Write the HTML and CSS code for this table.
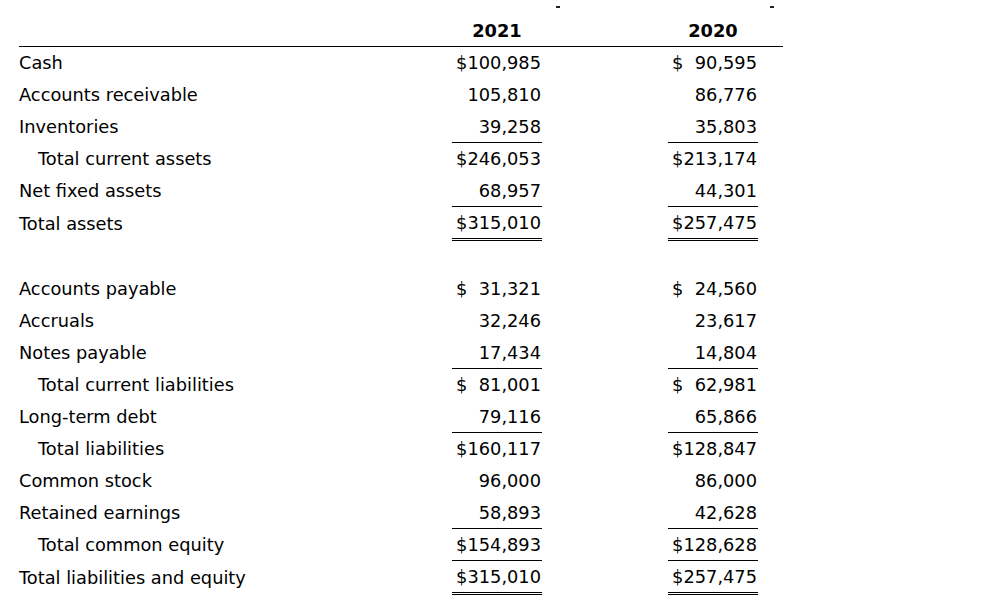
FILE: index.html
```html
<!DOCTYPE html>
<html lang="en">
<head>
<meta charset="utf-8">
<title>Balance Sheet</title>
<link rel="stylesheet" href="styles.css">
</head>
<body>
<div class="cutoff"><span class="tick tick-a"></span><span class="tick tick-b"></span></div>
<table class="sheet">
  <colgroup>
    <col class="c-label"><col class="c-num"><col class="c-gap"><col class="c-num"><col class="c-end">
  </colgroup>
  <thead>
    <tr><th></th><th class="year">2021</th><th></th><th class="year">2020</th><th></th></tr>
  </thead>
  <tbody>
    <tr><td>Cash</td><td class="num"><div class="amt"><span>$</span><span>100,985</span></div></td><td></td><td class="num"><div class="amt"><span>$</span><span>90,595</span></div></td><td></td></tr>
    <tr><td>Accounts receivable</td><td class="num"><div class="amt"><span></span><span>105,810</span></div></td><td></td><td class="num"><div class="amt"><span></span><span>86,776</span></div></td><td></td></tr>
    <tr><td>Inventories</td><td class="num rule"><div class="amt"><span></span><span>39,258</span></div></td><td></td><td class="num rule"><div class="amt"><span></span><span>35,803</span></div></td><td></td></tr>
    <tr><td class="indent">Total current assets</td><td class="num"><div class="amt"><span>$</span><span>246,053</span></div></td><td></td><td class="num"><div class="amt"><span>$</span><span>213,174</span></div></td><td></td></tr>
    <tr><td>Net fixed assets</td><td class="num rule"><div class="amt"><span></span><span>68,957</span></div></td><td></td><td class="num rule"><div class="amt"><span></span><span>44,301</span></div></td><td></td></tr>
    <tr><td>Total assets</td><td class="num dbl"><div class="amt"><span>$</span><span>315,010</span></div></td><td></td><td class="num dbl"><div class="amt"><span>$</span><span>257,475</span></div></td><td></td></tr>
    <tr class="blank"><td></td><td></td><td></td><td></td><td></td></tr>
    <tr><td>Accounts payable</td><td class="num"><div class="amt"><span>$</span><span>31,321</span></div></td><td></td><td class="num"><div class="amt"><span>$</span><span>24,560</span></div></td><td></td></tr>
    <tr><td>Accruals</td><td class="num"><div class="amt"><span></span><span>32,246</span></div></td><td></td><td class="num"><div class="amt"><span></span><span>23,617</span></div></td><td></td></tr>
    <tr><td>Notes payable</td><td class="num rule"><div class="amt"><span></span><span>17,434</span></div></td><td></td><td class="num rule"><div class="amt"><span></span><span>14,804</span></div></td><td></td></tr>
    <tr><td class="indent">Total current liabilities</td><td class="num"><div class="amt"><span>$</span><span>81,001</span></div></td><td></td><td class="num"><div class="amt"><span>$</span><span>62,981</span></div></td><td></td></tr>
    <tr><td>Long-term debt</td><td class="num rule"><div class="amt"><span></span><span>79,116</span></div></td><td></td><td class="num rule"><div class="amt"><span></span><span>65,866</span></div></td><td></td></tr>
    <tr><td class="indent">Total liabilities</td><td class="num"><div class="amt"><span>$</span><span>160,117</span></div></td><td></td><td class="num"><div class="amt"><span>$</span><span>128,847</span></div></td><td></td></tr>
    <tr><td>Common stock</td><td class="num"><div class="amt"><span></span><span>96,000</span></div></td><td></td><td class="num"><div class="amt"><span></span><span>86,000</span></div></td><td></td></tr>
    <tr><td>Retained earnings</td><td class="num rule"><div class="amt"><span></span><span>58,893</span></div></td><td></td><td class="num rule"><div class="amt"><span></span><span>42,628</span></div></td><td></td></tr>
    <tr><td class="indent">Total common equity</td><td class="num rule"><div class="amt"><span>$</span><span>154,893</span></div></td><td></td><td class="num rule"><div class="amt"><span>$</span><span>128,628</span></div></td><td></td></tr>
    <tr><td>Total liabilities and equity</td><td class="num dbl"><div class="amt"><span>$</span><span>315,010</span></div></td><td></td><td class="num dbl"><div class="amt"><span>$</span><span>257,475</span></div></td><td></td></tr>
  </tbody>
</table>
</body>
</html>
```
FILE: styles.css
```css
html, body {
  margin: 0;
  padding: 0;
  background: #fff;
}

body {
  font-family: "DejaVu Sans", Verdana, sans-serif;
  font-size: 17.8px;
  color: #000;
}

.cutoff {
  display: flex;
  align-items: flex-start;
  height: 15px;
}

.tick {
  display: block;
  height: 2px;
  width: 4px;
  margin-top: 6px;
  background: #222;
}

.tick-a {
  margin-left: 556px;
}

.tick-b {
  margin-left: 210px;
}

.sheet {
  margin-left: 19px;
  border-collapse: separate;
  border-spacing: 0;
  table-layout: fixed;
  width: 764px;
}

.c-label { width: 433px; }
.c-num { width: 90px; }
.c-gap { width: 126px; }
.c-end { width: 25px; }

.sheet th,
.sheet td {
  height: 31px;
  padding: 0;
  vertical-align: middle;
  white-space: nowrap;
}

.sheet th {
  border-bottom: 1px solid #000;
  font-weight: bold;
  text-align: center;
}

.sheet td {
  border-bottom: 1px solid transparent;
  text-align: left;
}

.sheet td.indent {
  padding-left: 19px;
}

.amt {
  display: flex;
  justify-content: space-between;
  padding-left: 4px;
  padding-right: 1px;
}

.sheet td.rule {
  border-bottom: 1px solid #000;
}

.sheet td.dbl {
  border-bottom: 3px double #000;
}
```
